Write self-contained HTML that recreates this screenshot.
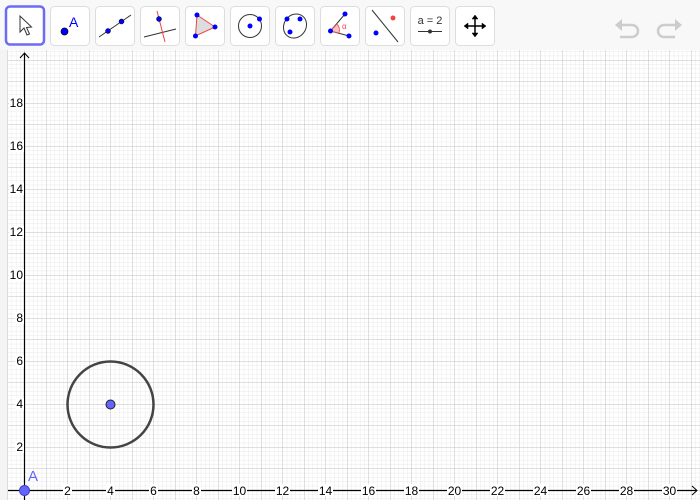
<!DOCTYPE html>
<html><head><style>
body{margin:0;width:700px;height:500px;overflow:hidden;background:#fff;font-family:"Liberation Sans",sans-serif;}
</style></head><body>
<svg width="700" height="500" xmlns="http://www.w3.org/2000/svg" style="position:absolute;left:0;top:0">
<defs>
<pattern id="mi" x="24.5" y="490" width="4.3" height="4.3" patternUnits="userSpaceOnUse">
<path d="M0 0V4.3M0 0H4.3" stroke="#e9e9e9" stroke-width="1" fill="none"/>
</pattern>
<pattern id="ma" x="24.5" y="490" width="21.5" height="21.5" patternUnits="userSpaceOnUse">
<path d="M0 0V21.5M0 0H21.5" stroke="#c0c0c0" stroke-width="1" fill="none"/>
</pattern>
</defs>
<rect x="0" y="0" width="700" height="50" fill="#f8f8f8"/>
<rect x="0" y="50" width="8" height="450" fill="#f4f4f4"/>
<line x1="7.5" y1="50" x2="7.5" y2="500" stroke="#ddd"/>
<rect x="8" y="50" width="692" height="450" fill="url(#mi)"/>
<rect x="8" y="50" width="692" height="450" fill="url(#ma)"/>
<line x1="24.5" y1="53" x2="24.5" y2="500" stroke="#000" stroke-width="1.2"/>
<path d="M20 58L24.5 53L29 58" stroke="#000" fill="none"/>
<line x1="8" y1="490.5" x2="697" y2="490.5" stroke="#000" stroke-width="1.2"/>
<path d="M692 486L697 490.5L692 495" stroke="#000" fill="none"/>
<g fill="#fff">
<rect x="63" y="484" width="9" height="12"/><rect x="106" y="484" width="9" height="12"/><rect x="149" y="484" width="9" height="12"/><rect x="192" y="484" width="9" height="12"/>
<rect x="232" y="484" width="15" height="12"/><rect x="275" y="484" width="15" height="12"/><rect x="318" y="484" width="15" height="12"/><rect x="361" y="484" width="15" height="12"/>
<rect x="404" y="484" width="15" height="12"/><rect x="447" y="484" width="15" height="12"/><rect x="490" y="484" width="15" height="12"/><rect x="533" y="484" width="15" height="12"/>
<rect x="576" y="484" width="15" height="12"/><rect x="619" y="484" width="15" height="12"/><rect x="662" y="484" width="15" height="12"/>
</g>
<g font-size="12" fill="#000" text-anchor="middle">
<text x="67.5" y="495">2</text><text x="110.5" y="495">4</text><text x="153.5" y="495">6</text><text x="196.5" y="495">8</text>
<text x="239.5" y="495">10</text><text x="282.5" y="495">12</text><text x="325.5" y="495">14</text><text x="368.5" y="495">16</text>
<text x="411.5" y="495">18</text><text x="454.5" y="495">20</text><text x="497.5" y="495">22</text><text x="540.5" y="495">24</text>
<text x="583.5" y="495">26</text><text x="626.5" y="495">28</text><text x="669.5" y="495">30</text>
</g>
<g fill="#fff">
<rect x="15" y="441" width="9" height="12"/><rect x="15" y="398" width="9" height="12"/><rect x="15" y="355" width="9" height="12"/><rect x="15" y="312" width="9" height="12"/>
<rect x="9" y="269" width="15" height="12"/><rect x="9" y="226" width="15" height="12"/><rect x="9" y="183" width="15" height="12"/><rect x="9" y="140" width="15" height="12"/><rect x="9" y="97" width="15" height="12"/>
</g>
<g font-size="12" fill="#000" text-anchor="end">
<text x="23" y="451">2</text><text x="23" y="408">4</text><text x="23" y="365">6</text><text x="23" y="322">8</text>
<text x="23" y="279">10</text><text x="23" y="236">12</text><text x="23" y="193">14</text><text x="23" y="150">16</text><text x="23" y="107">18</text>
</g>
<circle cx="110.5" cy="404.5" r="43" fill="none" stroke="#444" stroke-width="2.5"/>
<circle cx="110.5" cy="404.5" r="4.5" fill="#6464ff" stroke="#222" stroke-width="1"/>
<circle cx="24.5" cy="490.5" r="5" fill="#6464ff" stroke="#4040c0" stroke-width="1"/>
<text x="28" y="481" font-size="15" fill="#6464ff">A</text>
<g fill="#fff" stroke="#ddd">
<rect x="6" y="6.5" width="38" height="38" rx="4" stroke="#6b6bf5" stroke-width="2.5"/>
<rect x="50.5" y="6.5" width="39" height="39" rx="4"/>
<rect x="95.5" y="6.5" width="39" height="39" rx="4"/>
<rect x="140.5" y="6.5" width="39" height="39" rx="4"/>
<rect x="185.5" y="6.5" width="39" height="39" rx="4"/>
<rect x="230.5" y="6.5" width="39" height="39" rx="4"/>
<rect x="275.5" y="6.5" width="39" height="39" rx="4"/>
<rect x="320.5" y="6.5" width="39" height="39" rx="4"/>
<rect x="365.5" y="6.5" width="39" height="39" rx="4"/>
<rect x="410.5" y="6.5" width="39" height="39" rx="4"/>
<rect x="455.5" y="6.5" width="39" height="39" rx="4"/>
</g>
<path d="M20 16L20 32L24 28L27 35L29.5 34L26.5 27.5L31.5 27Z" fill="#fff" stroke="#333" stroke-width="1"/>
<circle cx="64.5" cy="31.5" r="3.5" fill="#00f" stroke="#000" stroke-width=".7"/>
<text x="69" y="27" font-size="14" fill="#00f">A</text>
<line x1="99" y1="37" x2="131" y2="15" stroke="#333"/>
<circle cx="108" cy="31" r="2.5" fill="#00f" stroke="#000" stroke-width=".5"/><circle cx="121.5" cy="21.5" r="2.5" fill="#00f" stroke="#000" stroke-width=".5"/>
<line x1="144" y1="37" x2="176" y2="29" stroke="#333"/>
<line x1="157" y1="11" x2="165" y2="42" stroke="#e44"/>
<circle cx="159" cy="19" r="2.5" fill="#00f" stroke="#000" stroke-width=".5"/>
<path d="M197 15L215 27L195.5 36Z" fill="#ddd" stroke="#e44"/>
<circle cx="197" cy="15" r="2.5" fill="#00f"/><circle cx="215" cy="27" r="2.5" fill="#00f"/><circle cx="195.5" cy="36" r="2.5" fill="#00f"/>
<circle cx="250" cy="26" r="11.5" fill="none" stroke="#333"/>
<circle cx="250" cy="26" r="2.5" fill="#00f"/><circle cx="259.5" cy="19" r="2.5" fill="#00f"/>
<ellipse cx="295" cy="26" rx="11" ry="12.5" transform="rotate(35 295 26)" fill="none" stroke="#333"/>
<circle cx="287" cy="19" r="2.5" fill="#00f"/><circle cx="300" cy="19" r="2.5" fill="#00f"/><circle cx="290" cy="32" r="2.5" fill="#00f"/>
<path d="M345 14L330.5 31L349 36" fill="none" stroke="#333"/>
<path d="M330.5 31L337 24A9 9 0 0 1 339 33Z" fill="#f4c4c4" stroke="#e44" stroke-width=".8"/>
<circle cx="345" cy="14" r="2.5" fill="#00f"/><circle cx="330.5" cy="31" r="2.5" fill="#00f"/><circle cx="349" cy="36" r="2.5" fill="#00f"/>
<text x="342" y="29" font-size="8" fill="#e44">α</text>
<line x1="372" y1="10" x2="398" y2="42" stroke="#333"/>
<circle cx="393" cy="18" r="2.5" fill="#e44"/><circle cx="376" cy="33" r="2.5" fill="#00f"/>
<text x="430" y="24" font-size="11" fill="#333" text-anchor="middle">a = 2</text>
<line x1="418" y1="31.5" x2="442" y2="31.5" stroke="#333"/><circle cx="430" cy="31.5" r="2" fill="#333"/>
<g stroke="#000" stroke-width="1.5" fill="#000">
<line x1="466" y1="26" x2="484" y2="26"/><line x1="475" y1="17" x2="475" y2="35"/>
<path d="M464 26L468 23V29Z M486 26L482 23V29Z M475 15L472 19H478Z M475 37L472 33H478Z" stroke-width="0.5"/>
</g>
<path d="M620 25H632A6 6 0 0 1 632 37H620" fill="none" stroke="#ccc" stroke-width="2.5"/>
<path d="M615 25L622 19V31Z" fill="#ccc"/>
<path d="M677 25H664A6 6 0 0 0 664 37H675" fill="none" stroke="#ccc" stroke-width="2.5"/>
<path d="M682 25L675 19V31Z" fill="#ccc"/>
</svg>
</body></html>
